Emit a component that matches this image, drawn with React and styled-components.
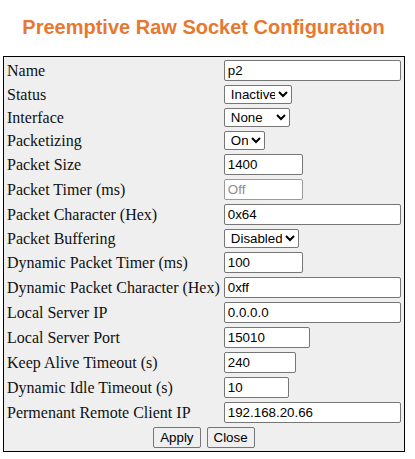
import React, { useState } from "react";
import styled, { createGlobalStyle } from "styled-components";

const GlobalStyle = createGlobalStyle`
  body {
    margin: 0;
    background: #ffffff;
    font-family: "Liberation Serif", "Times New Roman", serif;
  }
`;

const Page = styled.div`
  width: 401px;
  margin-left: 3px;
`;

const Title = styled.h1`
  margin: 16px 0 17px;
  font-family: "Liberation Sans", Arial, sans-serif;
  font-size: 20px;
  line-height: 23px;
  font-weight: bold;
  color: #e8782f;
  text-align: center;
`;

const Table = styled.table`
  width: 100%;
  border: 1px solid #000;
  background: #efefef;
  border-spacing: 2px;
  font-size: 16px;
  color: #111;
`;

const Label = styled.td`
  padding: 1px;
  white-space: nowrap;
  width: 1%;
`;

const Cell = styled.td`
  padding: 1px;
`;

const Actions = styled.td`
  padding: 1px;
  text-align: center;
`;

const TextInput = styled.input`
  box-sizing: border-box;
  width: ${(p) => p.$w}px;
  height: 21px;
  margin: 0;
  padding: 1px 3px;
  border: 1px solid #767676;
  border-radius: 2px;
  background: #fff;
  font-family: "Liberation Sans", Arial, sans-serif;
  font-size: 13.33px;
  color: #000;
  &:disabled {
    color: #8d8d8d;
    background: #fff;
    border-color: #9a9a9a;
  }
`;

const Select = styled.select`
  box-sizing: border-box;
  width: ${(p) => p.$w}px;
  height: 19px;
  margin: 0;
  padding: 0 0 0 2px;
  border: 1px solid #767676;
  border-radius: 2px;
  background: #fff;
  font-family: "Liberation Sans", Arial, sans-serif;
  font-size: 13.33px;
  color: #000;
`;

const Button = styled.button`
  height: 21px;
  margin: 0 1px;
  padding: 1px 6px;
  border: 1px solid #767676;
  border-radius: 2px;
  background: #efefef;
  font-family: "Liberation Sans", Arial, sans-serif;
  font-size: 13.33px;
  color: #000;
`;

const fields = [
  { label: "Name", kind: "text", value: "p2", w: 177 },
  { label: "Status", kind: "select", value: "Inactive", options: ["Inactive", "Active"], w: 68 },
  { label: "Interface", kind: "select", value: "None", options: ["None", "Eth0"], w: 66 },
  { label: "Packetizing", kind: "select", value: "On", options: ["On", "Off"], w: 41 },
  { label: "Packet Size", kind: "text", value: "1400", w: 79 },
  { label: "Packet Timer (ms)", kind: "text", value: "Off", w: 79, disabled: true },
  { label: "Packet Character (Hex)", kind: "text", value: "0x64", w: 177 },
  { label: "Packet Buffering", kind: "select", value: "Disabled", options: ["Disabled", "Enabled"], w: 75 },
  { label: "Dynamic Packet Timer (ms)", kind: "text", value: "100", w: 79 },
  { label: "Dynamic Packet Character (Hex)", kind: "text", value: "0xff", w: 177 },
  { label: "Local Server IP", kind: "text", value: "0.0.0.0", w: 177 },
  { label: "Local Server Port", kind: "text", value: "15010", w: 86 },
  { label: "Keep Alive Timeout (s)", kind: "text", value: "240", w: 72 },
  { label: "Dynamic Idle Timeout (s)", kind: "text", value: "10", w: 65 },
  { label: "Permenant Remote Client IP", kind: "text", value: "192.168.20.66", w: 177 },
];

const App = () => {
  const [values, setValues] = useState(
    Object.fromEntries(fields.map((f) => [f.label, f.value]))
  );

  const handleChange = (label, value) => {
    setValues({ ...values, [label]: value });
  };

  return (
    <Page>
      <GlobalStyle />
      <Title>Preemptive Raw Socket Configuration</Title>
      <Table>
        <tbody>
          {fields.map((f) => (
            <tr key={f.label}>
              <Label>{f.label}</Label>
              <Cell>
                {f.kind === "select" ? (
                  <Select
                    $w={f.w}
                    value={values[f.label]}
                    onChange={(e) => handleChange(f.label, e.target.value)}
                  >
                    {f.options.map((o) => (
                      <option key={o}>{o}</option>
                    ))}
                  </Select>
                ) : (
                  <TextInput
                    $w={f.w}
                    value={values[f.label]}
                    disabled={f.disabled}
                    onChange={(e) => handleChange(f.label, e.target.value)}
                  />
                )}
              </Cell>
            </tr>
          ))}
          <tr>
            <Actions colSpan={2}>
              <Button>Apply</Button> <Button>Close</Button>
            </Actions>
          </tr>
        </tbody>
      </Table>
    </Page>
  );
};

export default App;
